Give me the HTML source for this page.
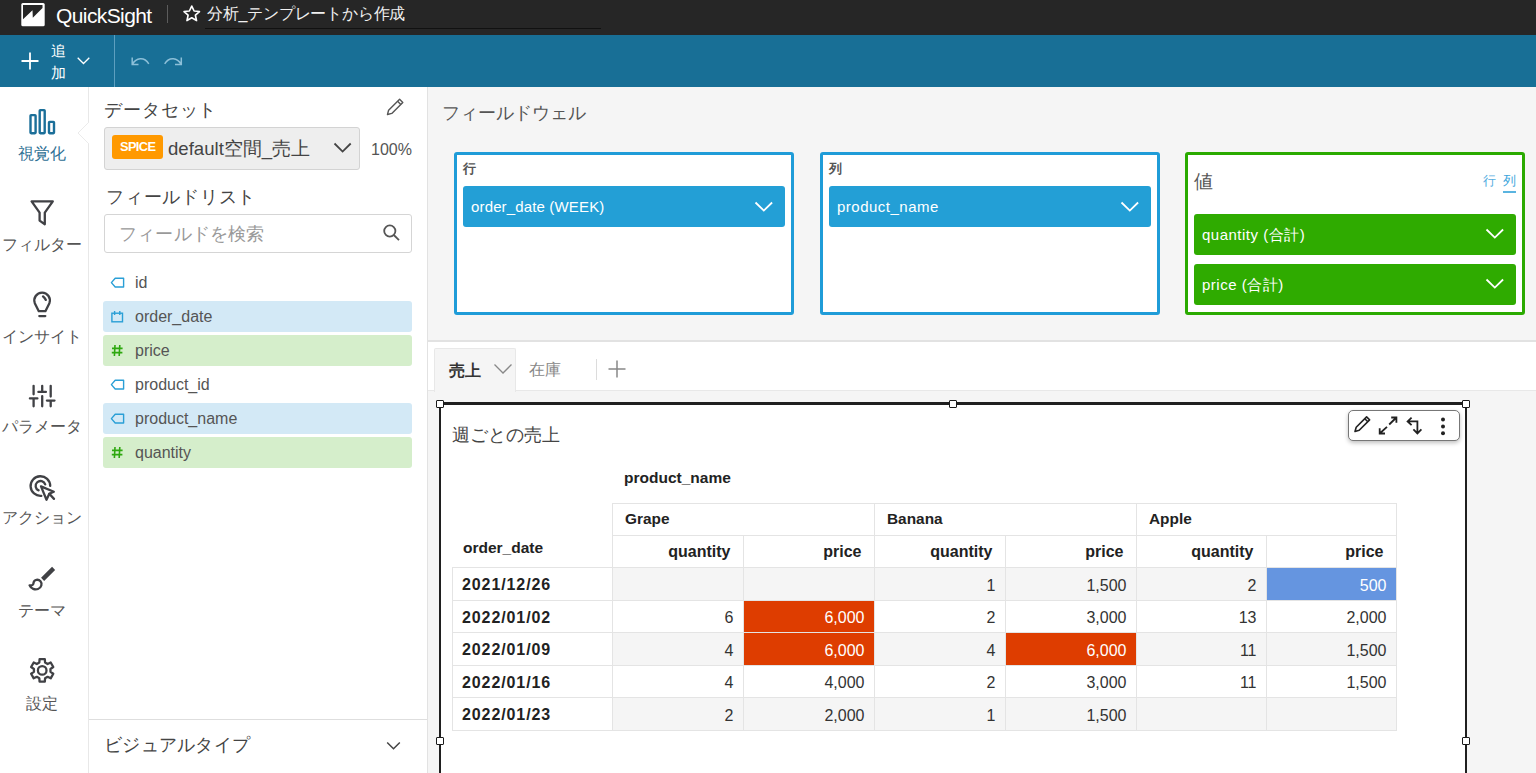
<!DOCTYPE html>
<html><head><meta charset="utf-8">
<style>
*{box-sizing:border-box;margin:0;padding:0}
html,body{width:1536px;height:773px;overflow:hidden;background:#f5f5f5;font-family:"Liberation Sans",sans-serif;color:#444}
div,svg{position:absolute}
.t{white-space:nowrap;line-height:1}
.lbl{left:0;width:84px;text-align:center;font-size:16px;color:#555;white-space:nowrap;line-height:16px}
</style></head>
<body>
<div style="left:0px;top:0px;width:1536px;height:35px;background:#262626"></div>
<svg style="left:21px;top:3px" width="24" height="24" viewBox="0 0 24 24"><rect x="0.3" y="0" width="23.4" height="23.3" rx="1.5" fill="#fff"/><polygon points="2,2 21.5,2 21.5,5 11.8,14.7 11.5,7.3 2,16.3" fill="#262626"/></svg>
<div class="t" style="left:56px;top:5px;font-size:21px;color:#fff;letter-spacing:-0.6px">QuickSight</div>
<div style="left:167px;top:5px;width:1.2px;height:18px;background:#5c5c5c"></div>
<svg style="left:181.5px;top:4.3px" width="19.5" height="19.5" viewBox="0 0 24 24"><polygon points="12,2.5 14.9,8.6 21.5,9.3 16.5,13.8 17.9,20.4 12,17 6.1,20.4 7.5,13.8 2.5,9.3 9.1,8.6" fill="none" stroke="#fff" stroke-width="2" stroke-linejoin="round"/></svg>
<div class="t" style="left:207px;top:5.5px;font-size:16px;color:#f0f0f0;letter-spacing:-0.2px">分析_テンプレートから作成</div>
<div style="left:205px;top:28px;width:396px;height:1px;background:#111"></div>
<div style="left:0px;top:35px;width:1536px;height:52px;background:#186f96"></div>
<svg style="left:21px;top:52px" width="18" height="18" viewBox="0 0 18 18"><path d="M9 0.5V17.5M0.5 9H17.5" stroke="#fff" stroke-width="1.8"/></svg>
<div class="t" style="left:51px;top:39.5px;font-size:14.5px;color:#fff;line-height:22px;width:16px">追<br>加</div>
<svg style="left:77px;top:57px" width="13" height="8" viewBox="0 0 13 8"><path d="M0.7 0.7L6.5 6.5L12.3 0.7" stroke="#fff" stroke-width="1.3" fill="none"/></svg>
<div style="left:114px;top:35px;width:1px;height:52px;background:#5d9fbf"></div>
<svg style="left:131px;top:56px" width="20" height="10" viewBox="0 0 20 10"><path d="M1.2 1.5V8.5H7.5M1.5 8C5 2 13 0 17.8 7.8" stroke="#8cbfd8" stroke-width="1.5" fill="none"/></svg>
<svg style="left:163px;top:56px" width="20" height="10" viewBox="0 0 20 10"><path d="M18.3 1.5V8.5H12M18 8C14.5 2 6.5 0 1.7 7.8" stroke="#8cbfd8" stroke-width="1.5" fill="none"/></svg>
<div style="left:0px;top:87px;width:89px;height:686px;background:#fff;border-right:1px solid #e8e8e8"></div>
<svg style="left:22px;top:100px" width="40" height="40" viewBox="22 100 40 40"><g fill="none" stroke="#1b6f99" stroke-width="2.4"><rect x="30.5" y="115.1" width="5.1" height="18.1" rx="0.6"/><rect x="39.7" y="110.1" width="5" height="23.1" rx="0.6"/><rect x="49" y="121.9" width="5" height="11.3" rx="0.6"/></g></svg>
<div class="lbl" style="left:0px;top:146px;color:#2d6f94">視覚化</div>
<svg style="left:22px;top:192px" width="40" height="40" viewBox="0 0 40 40"><path d="M9.6,9.4 H30.8 L22.8,20.7 V32.3 L17.6,28.6 V20.7 Z" fill="none" stroke="#404145" stroke-width="2.3" stroke-linejoin="round"/></svg>
<div class="lbl" style="left:0px;top:237px;">フィルター</div>
<svg style="left:22px;top:284px" width="40" height="40" viewBox="0 0 40 40"><g fill="none" stroke="#404145" stroke-width="2.3" stroke-linecap="round"><path d="M16.8,27.2 L12.8,19.2 A7.8,7.8 0 1,1 27.4,19.2 L23.4,27.2 Z" stroke-linejoin="round"/><path d="M17.3,32.1 H23.3"/><path d="M21,12.4 Q22.8,14 23.8,15.9"/></g></svg>
<div class="lbl" style="left:0px;top:328.5px;">インサイト</div>
<svg style="left:22px;top:376px" width="40" height="40" viewBox="0 0 40 40"><g fill="none" stroke="#404145" stroke-width="2.3" stroke-linecap="round"><path d="M11.6,9.8 V18.3 M7.9,22.4 H15.4 M11.6,22.4 V30.3 M20.2,9.8 V15.9 M16.4,15.9 H23.9 M20.2,20.1 V30.3 M28.7,9.8 V20.5 M24.9,24.6 H32.5 M28.7,24.6 V30.3"/></g></svg>
<div class="lbl" style="left:0px;top:419px;">パラメータ</div>
<svg style="left:22px;top:468px" width="40" height="40" viewBox="0 0 40 40"><g fill="none" stroke="#404145" stroke-width="2.3" stroke-linecap="round" stroke-linejoin="round"><path d="M19.3,27.8 A9.8,9.8 0 1,1 28.2,17.9"/><path d="M16.6,22.4 A4.9,4.9 0 1,1 23.2,16.4"/><path d="M19,18.4 L31.8,23.8 L27.3,25.8 L24.5,31.8 Z"/><path d="M27.3,25.8 L32,30.9"/></g></svg>
<div class="lbl" style="left:0px;top:510px;">アクション</div>
<svg style="left:22px;top:560px" width="40" height="40" viewBox="0 0 40 40"><g fill="none" stroke="#404145"><path d="M31.6,8.4 L20.6,19.4" stroke-width="4.4"/><path d="M7.6,25.4 C9,29 13,30 16,29 C19.5,27.8 20.5,23.5 18.5,21.2 C16.3,18.8 12.2,19.5 11.6,22.5 C11.3,24.3 11.5,25.6 7.6,25.4 Z" stroke-width="2.3" stroke-linejoin="round"/></g></svg>
<div class="lbl" style="left:0px;top:602.5px;">テーマ</div>
<svg style="left:22px;top:650px" width="40" height="40" viewBox="0 0 40 40"><g fill="none" stroke="#404145" stroke-width="2.3" stroke-linejoin="round"><path d="M17.33,12.51 L17.59,9.10 L22.81,9.10 L23.07,12.51 L25.60,13.97 L28.68,12.49 L31.29,17.01 L28.47,18.94 L28.47,21.86 L31.29,23.79 L28.68,28.31 L25.60,26.83 L23.07,28.29 L22.81,31.70 L17.59,31.70 L17.33,28.29 L14.80,26.83 L11.72,28.31 L9.11,23.79 L11.93,21.86 L11.93,18.94 L9.11,17.01 L11.72,12.49 L14.80,13.97 Z"/><circle cx="20.2" cy="20.4" r="4.3"/></g></svg>
<div class="lbl" style="left:0px;top:695.5px;">設定</div>
<svg style="left:77px;top:122px" width="13" height="22" viewBox="0 0 13 22"><path d="M12,0 L1,11 L12,22" fill="#fff" stroke="#ebebeb" stroke-width="1"/></svg>
<div style="left:89px;top:87px;width:339px;height:686px;background:#fff;border-right:1px solid #e2e2e2"></div>
<div class="t" style="left:104px;top:101px;font-size:18px;color:#444;letter-spacing:0.9px">データセット</div>
<svg style="left:385px;top:97px" width="20" height="20" viewBox="0 0 20 20"><g fill="none" stroke="#555" stroke-width="1.4" stroke-linejoin="round"><path d="M2.5,17.5 L3.6,13.2 L14.6,2.2 L17.8,5.4 L6.8,16.4 Z"/><path d="M12.6,4.2 L15.8,7.4"/></g></svg>
<div style="left:104px;top:127px;width:256px;height:43px;background:#eeeeee;border:1px solid #d3d3d3;border-radius:3px"></div>
<div style="left:112px;top:135px;width:51px;height:24px;background:#ff9900;border-radius:3px"></div>
<div class="t" style="left:120px;top:140.5px;font-size:12.8px;font-weight:bold;color:#fff;letter-spacing:-0.6px">SPICE</div>
<div class="t" style="left:168px;top:139.5px;font-size:18.6px;color:#444">default空間_売上</div>
<svg style="left:333px;top:142px" width="21" height="13" viewBox="0 0 21 13"><path d="M1.5,1.5 L9.6,9.6 L17.7,1.5" fill="none" stroke="#444" stroke-width="1.8"/></svg>
<div class="t" style="left:371px;top:142px;font-size:16px;color:#555">100%</div>
<div class="t" style="left:106px;top:188px;font-size:18px;color:#444;letter-spacing:0.75px">フィールドリスト</div>
<div style="left:104px;top:214px;width:308px;height:39px;background:#fff;border:1px solid #d5d5d5;border-radius:3px"></div>
<div class="t" style="left:119px;top:225px;font-size:18px;color:#999;letter-spacing:0.2px">フィールドを検索</div>
<svg style="left:381px;top:222px" width="22" height="22" viewBox="0 0 22 22"><g fill="none" stroke="#555" stroke-width="1.8"><circle cx="8.8" cy="9" r="5.6"/><path d="M12.8,13 L18,18.2"/></g></svg>
<svg style="left:110px;top:276.6px" width="16" height="12" viewBox="0 0 16 12"><path d="M13.6,1.2 H5.2 L1.4,5.6 L5.2,10 H13.6 Z" fill="none" stroke="#2a9fd6" stroke-width="1.4" stroke-linejoin="round"/></svg>
<div class="t" style="left:135px;top:274.6px;font-size:16px;color:#555">id</div>
<div style="left:103px;top:300.6px;width:309px;height:31px;background:#d3e9f6;border-radius:3px"></div>
<svg style="left:110px;top:309.6px" width="16" height="14" viewBox="0 0 16 14"><g fill="none" stroke="#2a9fd6" stroke-width="1.4"><rect x="1.9" y="3.2" width="10.6" height="8.6"/><path d="M4.6,1 V5 M9.8,1 V5"/></g></svg>
<div class="t" style="left:135px;top:308.6px;font-size:16px;color:#555">order_date</div>
<div style="left:103px;top:334.6px;width:309px;height:31px;background:#d5eecb;border-radius:3px"></div>
<svg style="left:110px;top:343.6px" width="16" height="14" viewBox="0 0 16 14"><g fill="none" stroke="#2ea80f" stroke-width="1.6"><path d="M5,1 L4.4,12 M9.8,1 L9.2,12 M2,4.4 H12.6 M1.8,8.6 H12.4"/></g></svg>
<div class="t" style="left:135px;top:342.6px;font-size:16px;color:#555">price</div>
<svg style="left:110px;top:378.6px" width="16" height="12" viewBox="0 0 16 12"><path d="M13.6,1.2 H5.2 L1.4,5.6 L5.2,10 H13.6 Z" fill="none" stroke="#2a9fd6" stroke-width="1.4" stroke-linejoin="round"/></svg>
<div class="t" style="left:135px;top:376.6px;font-size:16px;color:#555">product_id</div>
<div style="left:103px;top:402.6px;width:309px;height:31px;background:#d3e9f6;border-radius:3px"></div>
<svg style="left:110px;top:412.6px" width="16" height="12" viewBox="0 0 16 12"><path d="M13.6,1.2 H5.2 L1.4,5.6 L5.2,10 H13.6 Z" fill="none" stroke="#2a9fd6" stroke-width="1.4" stroke-linejoin="round"/></svg>
<div class="t" style="left:135px;top:410.6px;font-size:16px;color:#555">product_name</div>
<div style="left:103px;top:436.6px;width:309px;height:31px;background:#d5eecb;border-radius:3px"></div>
<svg style="left:110px;top:445.6px" width="16" height="14" viewBox="0 0 16 14"><g fill="none" stroke="#2ea80f" stroke-width="1.6"><path d="M5,1 L4.4,12 M9.8,1 L9.2,12 M2,4.4 H12.6 M1.8,8.6 H12.4"/></g></svg>
<div class="t" style="left:135px;top:444.6px;font-size:16px;color:#555">quantity</div>
<div style="left:89px;top:719px;width:338px;height:1px;background:#dedede"></div>
<div class="t" style="left:104px;top:736px;font-size:18px;color:#444;letter-spacing:0.3px">ビジュアルタイプ</div>
<svg style="left:386px;top:741px" width="15" height="10" viewBox="0 0 15 10"><path d="M1.2,1.5 L7.5,7.8 L13.8,1.5" fill="none" stroke="#444" stroke-width="1.5"/></svg>
<div style="left:428px;top:87px;width:1108px;height:253px;background:#f5f5f5"></div>
<div class="t" style="left:442px;top:104px;font-size:18px;color:#555">フィールドウェル</div>
<div style="left:454px;top:152px;width:340px;height:163px;background:#fff;border:3px solid #1f9cd8;border-radius:3px"></div>
<div class="t" style="left:463px;top:161.5px;font-size:13px;font-weight:bold;color:#555">行</div>
<div style="left:463px;top:186px;width:322px;height:41px;background:#239fd6;border-radius:3px"></div>
<div class="t" style="left:471px;top:199px;font-size:15px;color:#fff;letter-spacing:0.15px">order_date (WEEK)</div>
<svg style="left:754px;top:201px" width="20" height="12" viewBox="0 0 20 12"><path d="M1.5,1.5 L9.8,9.6 L18.1,1.5" fill="none" stroke="#fff" stroke-width="1.8"/></svg>
<div style="left:820px;top:152px;width:340px;height:163px;background:#fff;border:3px solid #1f9cd8;border-radius:3px"></div>
<div class="t" style="left:829px;top:161.5px;font-size:13px;font-weight:bold;color:#555">列</div>
<div style="left:829px;top:186px;width:322px;height:41px;background:#239fd6;border-radius:3px"></div>
<div class="t" style="left:837px;top:199px;font-size:15px;color:#fff;letter-spacing:0.5px">product_name</div>
<svg style="left:1120px;top:201px" width="20" height="12" viewBox="0 0 20 12"><path d="M1.5,1.5 L9.8,9.6 L18.1,1.5" fill="none" stroke="#fff" stroke-width="1.8"/></svg>
<div style="left:1185px;top:152px;width:340px;height:163px;background:#fff;border:3px solid #2aaa00;border-radius:3px"></div>
<div class="t" style="left:1194px;top:172px;font-size:19px;color:#555">値</div>
<div class="t" style="left:1483px;top:174px;font-size:13px;color:#55ade0">行</div>
<div class="t" style="left:1503px;top:174px;font-size:13px;color:#3ca5dc">列</div>
<div style="left:1502.5px;top:191px;width:13.5px;height:2px;background:#5ab4e0"></div>
<div style="left:1194px;top:213.5px;width:322px;height:41px;background:#2fab00;border-radius:3px"></div>
<div class="t" style="left:1202px;top:227px;font-size:15px;color:#fff;letter-spacing:0.5px">quantity (合計)</div>
<svg style="left:1485px;top:228px" width="20" height="12" viewBox="0 0 20 12"><path d="M1.5,1.5 L9.8,9.6 L18.1,1.5" fill="none" stroke="#fff" stroke-width="1.8"/></svg>
<div style="left:1194px;top:263.5px;width:322px;height:41px;background:#2fab00;border-radius:3px"></div>
<div class="t" style="left:1202px;top:277px;font-size:15px;color:#fff;letter-spacing:0.5px">price (合計)</div>
<svg style="left:1485px;top:278px" width="20" height="12" viewBox="0 0 20 12"><path d="M1.5,1.5 L9.8,9.6 L18.1,1.5" fill="none" stroke="#fff" stroke-width="1.8"/></svg>
<div style="left:428px;top:340px;width:1108px;height:2px;background:#e2e2e2"></div>
<div style="left:428px;top:342px;width:1108px;height:49px;background:#fff;border-bottom:1px solid #e8e8e8"></div>
<div style="left:434px;top:348px;width:82px;height:44px;background:#f5f5f5;border:1px solid #e8e8e8;border-bottom:none;border-radius:2px 2px 0 0"></div>
<div class="t" style="left:449px;top:363px;font-size:16px;font-weight:bold;color:#333">売上</div>
<svg style="left:493px;top:363px" width="20" height="12" viewBox="0 0 20 12"><path d="M1.5,1.5 L10,10 L18.5,1.5" fill="none" stroke="#888" stroke-width="1.3"/></svg>
<div class="t" style="left:529px;top:362px;font-size:16px;color:#888">在庫</div>
<div style="left:596px;top:359px;width:1px;height:21px;background:#dcdcdc"></div>
<svg style="left:607px;top:359px" width="20" height="20" viewBox="0 0 20 20"><path d="M10,1.5 V18.5 M1.5,10 H18.5" fill="none" stroke="#888" stroke-width="1.5"/></svg>
<div style="left:439px;top:402px;width:1028px;height:371px;background:#fff;border:2px solid #1f1f1f;border-top-width:3px;border-bottom:none"></div>
<div style="left:436px;top:399.5px;width:8px;height:8px;background:#fff;border:1.5px solid #1a1a1a;border-radius:1px"></div>
<div style="left:949px;top:399.5px;width:8px;height:8px;background:#fff;border:1.5px solid #1a1a1a;border-radius:1px"></div>
<div style="left:1462px;top:399.5px;width:8px;height:8px;background:#fff;border:1.5px solid #1a1a1a;border-radius:1px"></div>
<div style="left:436px;top:737px;width:8px;height:8px;background:#fff;border:1.5px solid #1a1a1a;border-radius:1px"></div>
<div style="left:1462px;top:737px;width:8px;height:8px;background:#fff;border:1.5px solid #1a1a1a;border-radius:1px"></div>
<div class="t" style="left:452px;top:426px;font-size:18px;color:#444">週ごとの売上</div>
<div style="left:1348px;top:410px;width:112px;height:31px;background:#fff;border:1px solid #777;border-radius:5px;box-shadow:0 2px 4px rgba(0,0,0,0.25)"></div>
<svg style="left:1352px;top:414px" width="22" height="22" viewBox="0 0 22 22"><g fill="none" stroke="#222" stroke-width="1.6" stroke-linejoin="round"><path d="M3,17.5 L4.2,13.3 L14.6,2.9 L17.6,5.9 L7.2,16.3 Z"/><path d="M12.8,4.7 L15.8,7.7"/></g></svg>
<svg style="left:1377px;top:414px" width="22" height="22" viewBox="0 0 22 22"><g fill="none" stroke="#222" stroke-width="1.8"><path d="M14.2,3.5 H19.4 V8.7 M19.4,3.5 L12.2,10.5 M2.7,14.2 V19.5 H8 M2.7,19.5 L10,12.8"/></g></svg>
<svg style="left:1403px;top:414px" width="22" height="22" viewBox="0 0 22 22"><g fill="none" stroke="#222" stroke-width="1.8" stroke-linejoin="miter"><path d="M8.6,3.6 L4.6,7.4 L8.6,11.2 M4.6,7.4 H14.4 V19.6 M10.4,15.4 L14.4,19.4 L18.4,15.4"/></g></svg>
<svg style="left:1437px;top:414px" width="12" height="24" viewBox="0 0 12 24"><g fill="#222"><circle cx="6" cy="5.6" r="2"/><circle cx="6" cy="12.4" r="2"/><circle cx="6" cy="19.3" r="2"/></g></svg>
<div class="t" style="left:624px;top:470px;font-size:15.5px;font-weight:bold;color:#222">product_name</div>
<div style="left:612px;top:503px;width:784px;height:64px;background:#fff"></div>
<div style="left:452px;top:567px;width:160px;height:33px;background:#fff"></div>
<div style="left:612px;top:567px;width:784px;height:33px;background:#f5f5f5"></div>
<div style="left:1267px;top:568px;width:129px;height:32px;background:#6595e0"></div>
<div style="left:452px;top:600px;width:160px;height:32px;background:#fff"></div>
<div style="left:612px;top:600px;width:784px;height:32px;background:#fff"></div>
<div style="left:744px;top:601px;width:130px;height:31px;background:#de3d00"></div>
<div style="left:452px;top:632px;width:160px;height:33px;background:#fff"></div>
<div style="left:612px;top:632px;width:784px;height:33px;background:#f5f5f5"></div>
<div style="left:744px;top:633px;width:130px;height:32px;background:#de3d00"></div>
<div style="left:1006px;top:633px;width:130px;height:32px;background:#de3d00"></div>
<div style="left:452px;top:665px;width:160px;height:32px;background:#fff"></div>
<div style="left:612px;top:665px;width:784px;height:32px;background:#fff"></div>
<div style="left:452px;top:697px;width:160px;height:33px;background:#fff"></div>
<div style="left:612px;top:697px;width:784px;height:33px;background:#f5f5f5"></div>
<div style="left:612px;top:503px;width:785px;height:1px;background:#e4e4e4"></div>
<div style="left:612px;top:535px;width:785px;height:1px;background:#e4e4e4"></div>
<div style="left:452px;top:567px;width:945px;height:1px;background:#e4e4e4"></div>
<div style="left:452px;top:600px;width:945px;height:1px;background:#e4e4e4"></div>
<div style="left:452px;top:632px;width:945px;height:1px;background:#e4e4e4"></div>
<div style="left:452px;top:665px;width:945px;height:1px;background:#e4e4e4"></div>
<div style="left:452px;top:697px;width:945px;height:1px;background:#e4e4e4"></div>
<div style="left:452px;top:730px;width:945px;height:1px;background:#e4e4e4"></div>
<div style="left:452px;top:567px;width:1px;height:164px;background:#e4e4e4"></div>
<div style="left:612px;top:503px;width:1px;height:228px;background:#e4e4e4"></div>
<div style="left:743px;top:535px;width:1px;height:196px;background:#e4e4e4"></div>
<div style="left:874px;top:503px;width:1px;height:228px;background:#e4e4e4"></div>
<div style="left:1005px;top:535px;width:1px;height:196px;background:#e4e4e4"></div>
<div style="left:1136px;top:503px;width:1px;height:228px;background:#e4e4e4"></div>
<div style="left:1266px;top:535px;width:1px;height:196px;background:#e4e4e4"></div>
<div style="left:1396px;top:503px;width:1px;height:228px;background:#e4e4e4"></div>
<div class="t" style="left:625px;top:511px;font-size:15.4px;font-weight:bold;color:#222">Grape</div>
<div class="t" style="left:887px;top:511px;font-size:15.4px;font-weight:bold;color:#222">Banana</div>
<div class="t" style="left:1149px;top:511px;font-size:15.4px;font-weight:bold;color:#222">Apple</div>
<div class="t" style="left:463px;top:540px;font-size:15.5px;font-weight:bold;color:#222">order_date</div>
<div class="t" style="left:612px;top:543.5px;width:118.5px;text-align:right;font-size:16px;font-weight:bold;color:#222">quantity</div>
<div class="t" style="left:743px;top:543.5px;width:118.5px;text-align:right;font-size:16px;font-weight:bold;color:#222">price</div>
<div class="t" style="left:874px;top:543.5px;width:118.5px;text-align:right;font-size:16px;font-weight:bold;color:#222">quantity</div>
<div class="t" style="left:1005px;top:543.5px;width:118.5px;text-align:right;font-size:16px;font-weight:bold;color:#222">price</div>
<div class="t" style="left:1136px;top:543.5px;width:117.5px;text-align:right;font-size:16px;font-weight:bold;color:#222">quantity</div>
<div class="t" style="left:1266px;top:543.5px;width:117.5px;text-align:right;font-size:16px;font-weight:bold;color:#222">price</div>
<div class="t" style="left:462px;top:577.0px;font-size:16px;font-weight:bold;color:#222;letter-spacing:0.9px">2021/12/26</div>
<div class="t" style="left:874px;top:577.5px;width:121.5px;text-align:right;font-size:16px;color:#333">1</div>
<div class="t" style="left:1005px;top:577.5px;width:121.5px;text-align:right;font-size:16px;color:#333">1,500</div>
<div class="t" style="left:1136px;top:577.5px;width:120.5px;text-align:right;font-size:16px;color:#333">2</div>
<div class="t" style="left:1266px;top:577.5px;width:120.5px;text-align:right;font-size:16px;color:#fff">500</div>
<div class="t" style="left:462px;top:609.5px;font-size:16px;font-weight:bold;color:#222;letter-spacing:0.9px">2022/01/02</div>
<div class="t" style="left:612px;top:610.0px;width:121.5px;text-align:right;font-size:16px;color:#333">6</div>
<div class="t" style="left:743px;top:610.0px;width:121.5px;text-align:right;font-size:16px;color:#fff">6,000</div>
<div class="t" style="left:874px;top:610.0px;width:121.5px;text-align:right;font-size:16px;color:#333">2</div>
<div class="t" style="left:1005px;top:610.0px;width:121.5px;text-align:right;font-size:16px;color:#333">3,000</div>
<div class="t" style="left:1136px;top:610.0px;width:120.5px;text-align:right;font-size:16px;color:#333">13</div>
<div class="t" style="left:1266px;top:610.0px;width:120.5px;text-align:right;font-size:16px;color:#333">2,000</div>
<div class="t" style="left:462px;top:642.0px;font-size:16px;font-weight:bold;color:#222;letter-spacing:0.9px">2022/01/09</div>
<div class="t" style="left:612px;top:642.5px;width:121.5px;text-align:right;font-size:16px;color:#333">4</div>
<div class="t" style="left:743px;top:642.5px;width:121.5px;text-align:right;font-size:16px;color:#fff">6,000</div>
<div class="t" style="left:874px;top:642.5px;width:121.5px;text-align:right;font-size:16px;color:#333">4</div>
<div class="t" style="left:1005px;top:642.5px;width:121.5px;text-align:right;font-size:16px;color:#fff">6,000</div>
<div class="t" style="left:1136px;top:642.5px;width:120.5px;text-align:right;font-size:16px;color:#333">11</div>
<div class="t" style="left:1266px;top:642.5px;width:120.5px;text-align:right;font-size:16px;color:#333">1,500</div>
<div class="t" style="left:462px;top:674.5px;font-size:16px;font-weight:bold;color:#222;letter-spacing:0.9px">2022/01/16</div>
<div class="t" style="left:612px;top:675.0px;width:121.5px;text-align:right;font-size:16px;color:#333">4</div>
<div class="t" style="left:743px;top:675.0px;width:121.5px;text-align:right;font-size:16px;color:#333">4,000</div>
<div class="t" style="left:874px;top:675.0px;width:121.5px;text-align:right;font-size:16px;color:#333">2</div>
<div class="t" style="left:1005px;top:675.0px;width:121.5px;text-align:right;font-size:16px;color:#333">3,000</div>
<div class="t" style="left:1136px;top:675.0px;width:120.5px;text-align:right;font-size:16px;color:#333">11</div>
<div class="t" style="left:1266px;top:675.0px;width:120.5px;text-align:right;font-size:16px;color:#333">1,500</div>
<div class="t" style="left:462px;top:707.0px;font-size:16px;font-weight:bold;color:#222;letter-spacing:0.9px">2022/01/23</div>
<div class="t" style="left:612px;top:707.5px;width:121.5px;text-align:right;font-size:16px;color:#333">2</div>
<div class="t" style="left:743px;top:707.5px;width:121.5px;text-align:right;font-size:16px;color:#333">2,000</div>
<div class="t" style="left:874px;top:707.5px;width:121.5px;text-align:right;font-size:16px;color:#333">1</div>
<div class="t" style="left:1005px;top:707.5px;width:121.5px;text-align:right;font-size:16px;color:#333">1,500</div>
</body></html>
